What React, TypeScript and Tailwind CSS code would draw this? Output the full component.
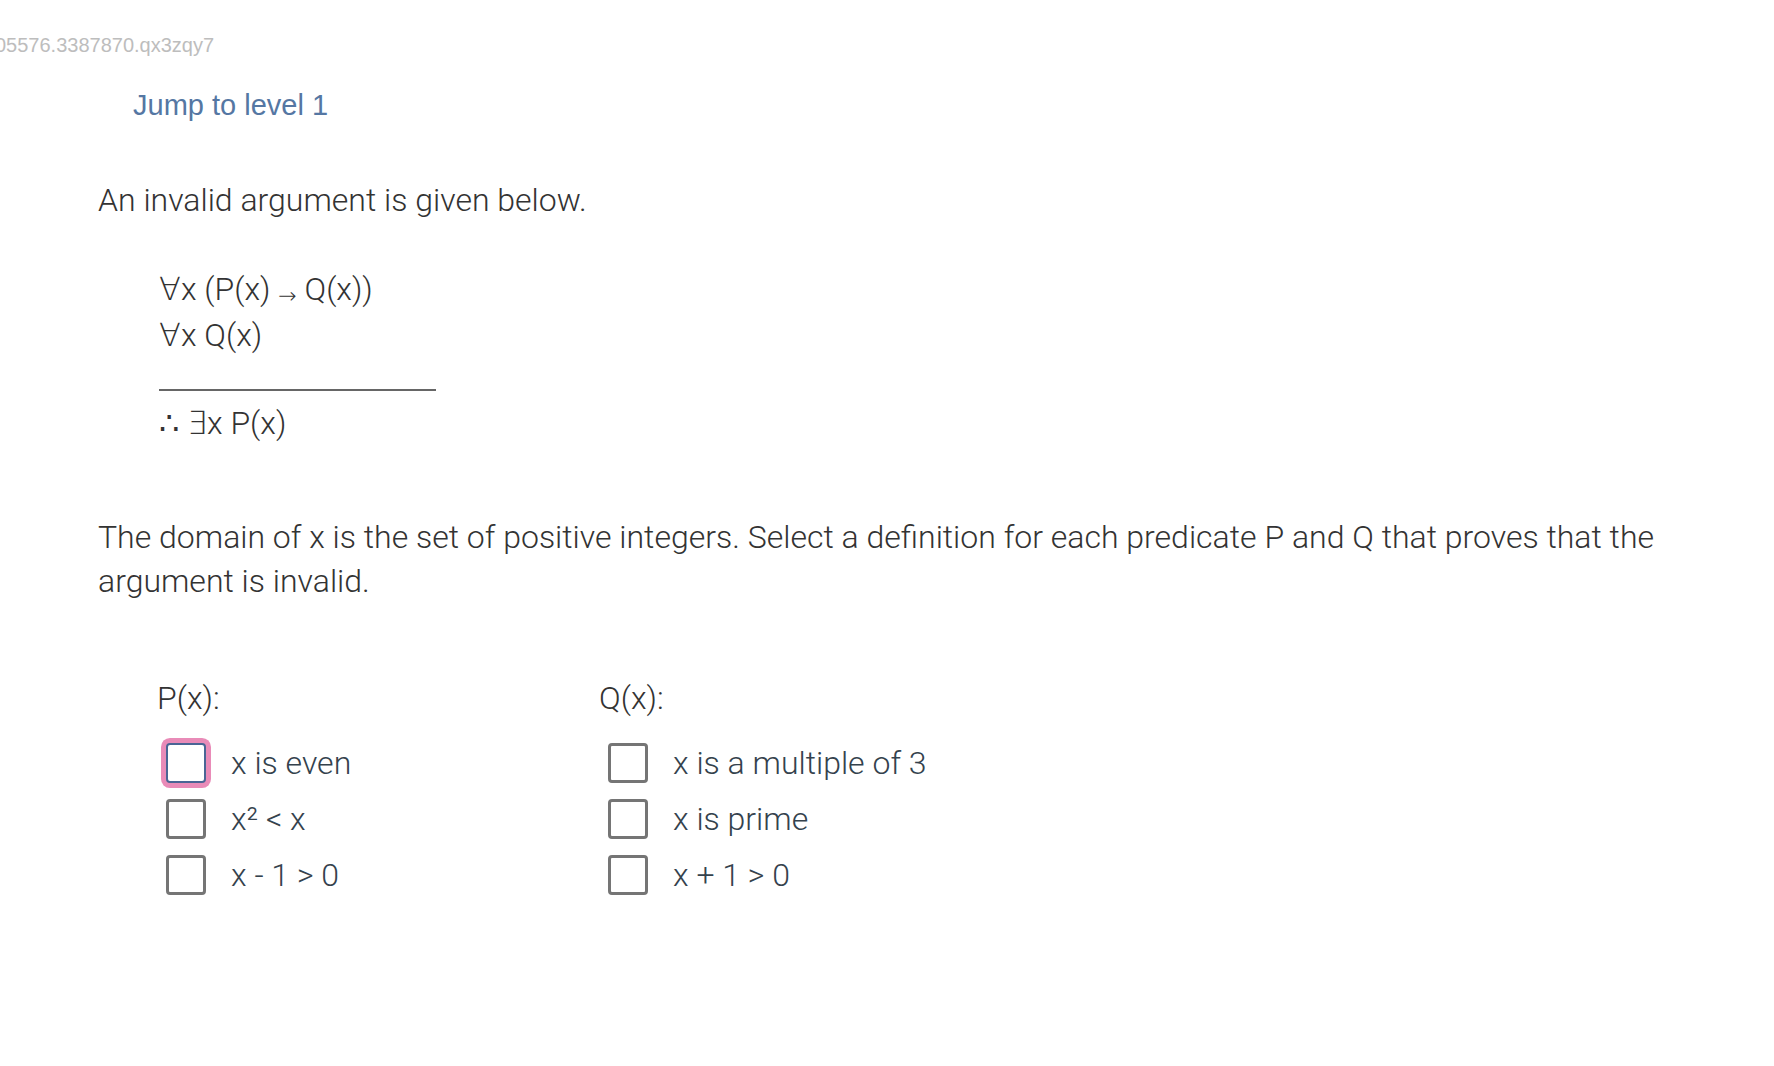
import { useState } from 'react'

const P_OPTIONS = ['x is even', 'x² < x', 'x - 1 > 0']
const Q_OPTIONS = ['x is a multiple of 3', 'x is prime', 'x + 1 > 0']

const roboto = { fontFamily: 'Roboto, "Noto Sans", sans-serif' }
const symbolFont = { fontFamily: '"DejaVu Sans", "Noto Sans", sans-serif' }

function Sym({ children }: { children: string }) {
  return (
    <span className="font-extralight" style={symbolFont}>
      {children}
    </span>
  )
}

function Box({ focused, checked, onClick }: { focused: boolean; checked: boolean; onClick: () => void }) {
  if (focused) {
    return (
      <button
        type="button"
        onClick={onClick}
        className="flex h-[40px] w-[40px] shrink-0 items-center justify-center rounded-[4px] border-2 border-[#4a6595] bg-white ring-[5px] ring-[#e98bb8]"
      />
    )
  }
  return (
    <button
      type="button"
      onClick={onClick}
      className="flex h-[40px] w-[40px] shrink-0 items-center justify-center rounded-[4px] border-[3px] border-[#757575] bg-white"
    >
      {checked ? <span className="text-lg text-[#757575]">✓</span> : null}
    </button>
  )
}

function Column({ label, options, focusFirst }: { label: string; options: string[]; focusFirst?: boolean }) {
  const [checked, setChecked] = useState<boolean[]>(options.map(() => false))
  return (
    <div className="w-[442px]">
      <div className="h-[40px] text-[32px] leading-[40px] font-light text-[#333]">{label}</div>
      <div className="mt-[17px] flex flex-col">
        {options.map((opt, i) => (
          <div key={opt} className="flex h-[56px] items-center gap-[25px] pl-[9px]">
            <Box
              focused={!!focusFirst && i === 0}
              checked={checked[i]}
              onClick={() => setChecked((c) => c.map((v, j) => (j === i ? !v : v)))}
            />
            <span className="text-[32px] font-light text-[#34424d]">{opt}</span>
          </div>
        ))}
      </div>
    </div>
  )
}

export default function App() {
  return (
    <div className="min-h-screen overflow-hidden bg-white">
      <div
        className="-ml-[5px] pt-[33px] text-[20px] leading-[24px] text-[#bdbdbd]"
        style={{ fontFamily: '"Liberation Sans", Arial, sans-serif' }}
      >
        05576.3387870.qx3zqy7
      </div>
      <div
        className="mt-[30px] pl-[133px] text-[29px] leading-[36px] text-[#5577a3]"
        style={{ fontFamily: '"Liberation Sans", Arial, sans-serif' }}
      >
        Jump to level 1
      </div>

      <div className="pl-[98px]" style={roboto}>
        <p className="mt-[57px] h-[40px] text-[32px] leading-[40px] font-light text-[#333]">
          An invalid argument is given below.
        </p>

        <div className="mt-[46px] pl-[61px] text-[32px] font-light text-[#333]">
          <div className="h-[46px] leading-[46px]">
            <Sym>∀</Sym>x (P(x){' '}
            <span className="relative top-[3px] text-[22px] leading-none" style={symbolFont}>
              →
            </span>{' '}
            Q(x))
          </div>
          <div className="h-[46px] leading-[46px]">
            <Sym>∀</Sym>x Q(x)
          </div>
          <div className="mt-[31px] h-[2px] w-[277px] bg-[#666]" />
          <div className="mt-[9px] h-[46px] leading-[46px]">
            ∴ <Sym>∃</Sym>x P(x)
          </div>
        </div>

        <p className="mt-[69px] w-[1600px] text-[32px] leading-[44px] font-light text-[#333]">
          The domain of x is the set of positive integers. Select a definition for each predicate P and Q that proves that the
          argument is invalid.
        </p>

        <div className="mt-[75px] flex pl-[59px]">
          <Column label="P(x):" options={P_OPTIONS} focusFirst />
          <Column label="Q(x):" options={Q_OPTIONS} />
        </div>
      </div>
    </div>
  )
}
